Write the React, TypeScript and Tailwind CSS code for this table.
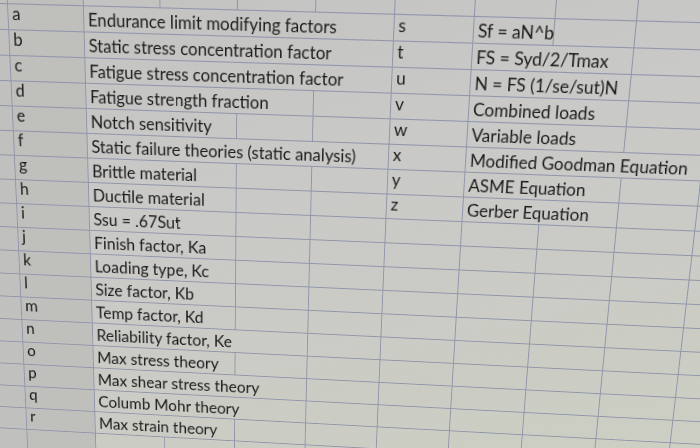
import React from "react";

function solve(A: number[][], b: number[]): number[] {
  const n = b.length;
  const M = A.map((r, i) => [...r, b[i]]);
  for (let c = 0; c < n; c++) {
    let p = c;
    for (let r = c + 1; r < n; r++) if (Math.abs(M[r][c]) > Math.abs(M[p][c])) p = r;
    const t = M[c];
    M[c] = M[p];
    M[p] = t;
    for (let r = 0; r < n; r++) {
      if (r === c) continue;
      const f = M[r][c] / M[c][c];
      for (let k = c; k <= n; k++) M[r][k] -= f * M[c][k];
    }
  }
  return M.map((r, i) => r[n] / r[i]);
}

// Perspective of the photographed screen: maps the flat sheet onto the photo.
function homography(src: number[][], dst: number[][]) {
  const A: number[][] = [];
  const b: number[] = [];
  for (let i = 0; i < 4; i++) {
    const [x, y] = src[i];
    const [u, v] = dst[i];
    A.push([x, y, 1, 0, 0, 0, -x * u, -y * u]);
    b.push(u);
    A.push([0, 0, 0, x, y, 1, -x * v, -y * v]);
    b.push(v);
  }
  const h = solve(A, b);
  return `matrix3d(${h[0]},${h[3]},0,${h[6]},${h[1]},${h[4]},0,${h[7]},0,0,1,0,${h[2]},${h[5]},0,1)`;
}

const SPAN: Record<number, string> = {
  1: "col-span-1",
  2: "col-span-2",
  3: "col-span-3",
  4: "col-span-4",
  5: "col-span-5",
  6: "col-span-6",
};

const left: [string, string, number][] = [
  ["a", "Endurance limit modifying factors", 4],
  ["b", "Static stress concentration factor", 4],
  ["c", "Fatigue stress concentration factor", 4],
  ["d", "Fatigue strength fraction", 3],
  ["e", "Notch sensitivity", 2],
  ["f", "Static failure theories (static analysis)", 4],
  ["g", "Brittle material", 2],
  ["h", "Ductile material", 2],
  ["i", "Ssu = .67Sut", 2],
  ["j", "Finish factor, Ka", 2],
  ["k", "Loading type, Kc", 2],
  ["l", "Size factor, Kb", 2],
  ["m", "Temp factor, Kd", 2],
  ["n", "Reliability factor, Ke", 3],
  ["o", "Max stress theory", 2],
  ["p", "Max shear stress theory", 3],
  ["q", "Columb Mohr theory", 3],
  ["r", "Max strain theory", 2],
];

const right: [string, string, number][] = [
  ["s", "Sf = aN^b", 1],
  ["t", "FS = Syd/2/Tmax", 2],
  ["u", "N = FS (1/se/sut)N", 2],
  ["v", "Combined loads", 2],
  ["w", "Variable loads", 2],
  ["x", "Modified Goodman Equation", 3],
  ["y", "ASME Equation", 2],
  ["z", "Gerber Equation", 2],
];

const cell = "border-r border-b border-[#9095aa] flex items-center whitespace-nowrap pl-[4px]";

function Row({ r }: { r: number }) {
  const cells: React.ReactNode[] = [];
  const L = r >= 0 ? left[r] : undefined;
  const R = r >= 0 ? right[r] : undefined;
  cells.push(<div key="pre" className={`${cell} bg-[#c0c0be]`} />);
  cells.push(
    <div key="A" className={`${cell} pb-[8px] bg-[#bfbfbc]`}>
      {L ? L[0] : ""}
    </div>
  );
  let used = 0;
  if (L) {
    cells.push(
      <div key="B" className={`${cell} ${SPAN[L[2]]}`}>
        {L[1]}
      </div>
    );
    used = L[2];
  }
  for (let i = used; i < 4; i++) cells.push(<div key={`e${i}`} className={cell} />);
  cells.push(
    <div key="F" className={`${cell} pb-[5px]`}>
      {R ? R[0] : ""}
    </div>
  );
  let usedR = 0;
  if (R) {
    cells.push(
      <div key="G" className={`${cell} ${SPAN[R[2]]}`}>
        {R[1]}
      </div>
    );
    usedR = R[2];
  }
  for (let i = usedR; i < 6; i++) cells.push(<div key={`g${i}`} className={cell} />);
  return <>{cells}</>;
}

export default function App() {
  const transform = homography(
    [
      [164, 37.5],
      [164, 462.5],
      [564, 37.5],
      [564, 212.5],
    ],
    [
      [88, 19.5],
      [99, 423],
      [478, 30.5],
      [467, 210],
    ]
  );
  const rows: number[] = [];
  for (let r = -1; r < 20; r++) rows.push(r);
  return (
    <div className="w-[700px] h-[448px] overflow-hidden bg-[#c6c7c2]">
      <div
        className="grid w-max grid-cols-[repeat(13,80px)] auto-rows-[25px] origin-top-left bg-[linear-gradient(165deg,#c1c1c0_0%,#c9c9c7_35%,#cbcdc4_70%,#ced1c3_100%)] font-['Lato',sans-serif] text-[17.5px] leading-[25px] text-[#1c1c1c] antialiased"
        style={{ transform, transformOrigin: "0 0" }}
      >
        {rows.map((r) => (
          <Row key={r} r={r} />
        ))}
      </div>
    </div>
  );
}
